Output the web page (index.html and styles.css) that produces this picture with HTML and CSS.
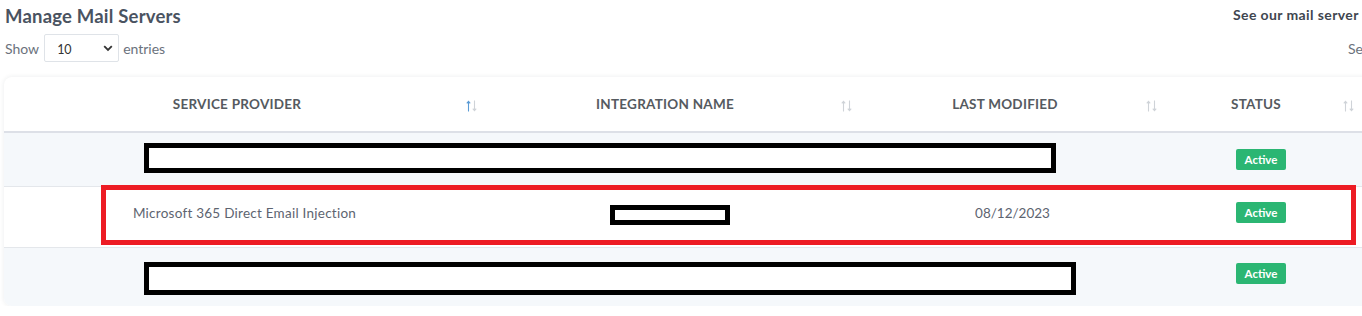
FILE: index.html
```html
<!DOCTYPE html>
<html lang="en">
<head>
<meta charset="utf-8">
<title>Manage Mail Servers</title>
<link rel="stylesheet" href="styles.css">
</head>
<body>
<div class="page">
  <div class="toolbar">
    <h1 class="title">Manage Mail Servers</h1>
    <a class="guide-link">See our mail server</a>
  </div>
  <div class="controls">
    <label class="length"><span>Show</span>
      <span class="select"><span class="select-value">10</span>
        <svg class="chevron" width="10" height="7" viewBox="0 0 10 7"><path d="M1.2 1.2 L5 5 L8.8 1.2" fill="none" stroke="#333" stroke-width="1.8"/></svg>
      </span>
      <span>entries</span></label>
    <label class="search">Search:</label>
  </div>
  <div class="card">
    <table class="grid">
      <colgroup>
        <col class="c1"><col class="c2"><col class="c3"><col class="c4">
      </colgroup>
      <thead>
        <tr>
          <th><div class="th-in"><span class="th-label">Service Provider</span>
            <svg class="sort" width="11" height="12" viewBox="0 0 11 12"><path d="M2.5 11.5V1.5M0.8 3.3L2.5 1.3L4.2 3.3" fill="none" stroke="#5b9bd5" stroke-width="1.1"/><path d="M8.5 0.5V10.5M6.8 8.7L8.5 10.7L10.2 8.7" fill="none" stroke="#cfd3d8" stroke-width="1.1"/></svg></div></th>
          <th><div class="th-in"><span class="th-label">Integration Name</span>
            <svg class="sort" width="11" height="12" viewBox="0 0 11 12"><path d="M2.5 11.5V1.5M0.8 3.3L2.5 1.3L4.2 3.3" fill="none" stroke="#cfd3d8" stroke-width="1.1"/><path d="M8.5 0.5V10.5M6.8 8.7L8.5 10.7L10.2 8.7" fill="none" stroke="#cfd3d8" stroke-width="1.1"/></svg></div></th>
          <th><div class="th-in"><span class="th-label">Last Modified</span>
            <svg class="sort" width="11" height="12" viewBox="0 0 11 12"><path d="M2.5 11.5V1.5M0.8 3.3L2.5 1.3L4.2 3.3" fill="none" stroke="#cfd3d8" stroke-width="1.1"/><path d="M8.5 0.5V10.5M6.8 8.7L8.5 10.7L10.2 8.7" fill="none" stroke="#cfd3d8" stroke-width="1.1"/></svg></div></th>
          <th><div class="th-in"><span class="th-label">Status</span>
            <svg class="sort" width="11" height="12" viewBox="0 0 11 12"><path d="M2.5 11.5V1.5M0.8 3.3L2.5 1.3L4.2 3.3" fill="none" stroke="#cfd3d8" stroke-width="1.1"/><path d="M8.5 0.5V10.5M6.8 8.7L8.5 10.7L10.2 8.7" fill="none" stroke="#cfd3d8" stroke-width="1.1"/></svg></div></th>
        </tr>
      </thead>
      <tbody>
        <tr class="row-a">
          <td></td><td></td><td></td>
          <td><span class="badge">Active</span></td>
        </tr>
        <tr class="row-b">
          <td class="provider">Microsoft 365 Direct Email Injection</td>
          <td></td>
          <td>08/12/2023</td>
          <td><span class="badge">Active</span></td>
        </tr>
        <tr class="row-c">
          <td></td><td></td><td></td>
          <td><span class="badge">Active</span></td>
        </tr>
      </tbody>
    </table>
    <div class="redact redact-1"></div>
    <div class="redact redact-2"></div>
    <div class="redact redact-3"></div>
    <div class="highlight"></div>
  </div>
</div>
</body>
</html>
```

FILE: styles.css
```css
html, body {
  margin: 0;
  padding: 0;
  background: #ffffff;
  overflow: hidden;
}
body {
  font-family: Lato, "Open Sans", "Liberation Sans", sans-serif;
  color: #5d6470;
}
.page {
  width: 1362px;
  box-sizing: border-box;
  padding: 0 0 0 5px;
}
.toolbar {
  display: flex;
  justify-content: space-between;
  align-items: center;
  height: 30px;
  padding-top: 1px;
}
.title {
  margin: 0;
  font-size: 18.5px;
  font-weight: 700;
  color: #4a5361;
  letter-spacing: 0.2px;
}
.guide-link {
  width: 129px;
  flex-shrink: 0;
  white-space: nowrap;
  font-size: 14px;
  font-weight: 700;
  letter-spacing: 0.4px;
  color: #3f4650;
  margin-top: -4px;
}
.controls {
  display: flex;
  justify-content: space-between;
  align-items: center;
  height: 28px;
  margin-top: 3px;
  font-size: 14px;
  color: #6b727c;
}
.length {
  display: flex;
  align-items: center;
  gap: 4px;
}
.select {
  display: flex;
  align-items: center;
  justify-content: space-between;
  box-sizing: border-box;
  width: 75px;
  height: 28px;
  margin: 0 0 0 1px;
  padding: 0 5px 0 12px;
  border: 1px solid #dfe3e8;
  border-radius: 2px;
  font-size: 12.5px;
  color: #333;
}
.select-value { padding-top: 2px; }
.chevron { margin-top: 1px; }
.search {
  width: 14px;
  white-space: nowrap;
  flex-shrink: 0;
  color: #6b727c;
}
.card {
  position: relative;
  width: 1400px;
  margin: 15px 0 0 -1px;
  background: #ffffff;
  border-radius: 8px;
  box-shadow: 0 0 5px rgba(30, 40, 60, 0.09);
  overflow: hidden;
}
.grid {
  width: 1358px;
  table-layout: fixed;
  border-collapse: collapse;
}
.c1 { width: 481px; }
.c2 { width: 375px; }
.c3 { width: 305px; }
.c4 { width: 197px; }
.grid th {
  height: 54px;
  padding: 0 8px 0 12px;
  border-bottom: 2px solid #dde0e7;
  font-size: 13.5px;
  letter-spacing: 0.25px;
  font-weight: 700;
  text-transform: uppercase;
  color: #555a60;
}
.th-in {
  display: flex;
  align-items: center;
  gap: 8px;
}
.th-label {
  flex: 1;
  text-align: center;
  margin-top: -1px;
}
.sort {
  flex-shrink: 0;
  margin-top: 4px;
}
.grid td {
  padding: 0 10px;
  text-align: center;
  font-size: 13.5px;
  color: #5d6470;
  border-bottom: 1px solid #e4e7eb;
}
.grid td.provider { letter-spacing: 0.25px; }
.row-a td { height: 53px; background: #f5f8fb; }
.row-b td { height: 51px; padding-bottom: 9px; background: #ffffff; }
.row-c td { height: 51px; padding-bottom: 7px; background: #f5f8fb; border-bottom: none; }
.badge {
  display: inline-block;
  width: 50px;
  height: 21px;
  line-height: 21px;
  border-radius: 2px;
  background: #2bb673;
  color: #ffffff;
  font-size: 11.5px;
  font-weight: 700;
  margin-left: -5px;
  letter-spacing: 0;
}
.redact {
  position: absolute;
  box-sizing: border-box;
  border: 5px solid #000000;
  background: #ffffff;
}
.redact-1 { left: 140px; top: 66px; width: 912px; height: 30px; }
.redact-2 { left: 606px; top: 128px; width: 120px; height: 20px; }
.redact-3 { left: 140px; top: 185px; width: 932px; height: 33px; }
.highlight {
  position: absolute;
  box-sizing: border-box;
  left: 97px;
  top: 108px;
  width: 1255px;
  height: 60px;
  border: 5px solid #ed1c24;
}
```
